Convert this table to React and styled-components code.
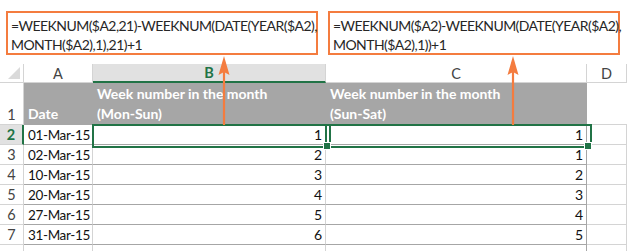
import React from 'react';
import styled, { createGlobalStyle } from 'styled-components';

const Global = createGlobalStyle`
  html, body { margin: 0; padding: 0; background: #fff; }
  body { font-family: Lato, "Open Sans", sans-serif; overflow: hidden; }
`;

const ORANGE = '#f47c3f';
const GREEN = '#217346';

const Page = styled.div`
  position: relative;
  width: 627px;
  height: 251px;
  overflow: hidden;
`;

const FormulaBar = styled.div`
  display: flex;
  gap: 10px;
  padding: 11px 0 0 6px;
  height: 44px;
`;

const Formula = styled.div`
  box-sizing: border-box;
  width: ${p => p.w}px;
  height: 44px;
  border: 2.5px solid ${ORANGE};
  padding: 3px 0 0 3px;
  font-size: 14px;
  letter-spacing: -0.55px;
  line-height: 19px;
  color: #262626;
  white-space: nowrap;
`;

const Sheet = styled.div`
  margin-top: 9px;
  display: grid;
  grid-template-columns: 24px 69px 233px 261px 1fr;
  grid-template-rows: 19px 42px repeat(6, 20px) 20px;
  font-size: 14px;
`;

const ColHead = styled.div`
  display: flex;
  align-items: center;
  justify-content: center;
  font-size: 14.5px;
  background: ${p => (p.active ? '#e1e1e1' : '#fff')};
  color: ${p => (p.active ? GREEN : '#444')};
  font-weight: ${p => (p.active ? 700 : 400)};
  border-right: 1px solid #d4d4d4;
  border-bottom: ${p => (p.active ? `2px solid ${GREEN}` : '1px solid #d4d4d4')};
  box-sizing: border-box;
`;

const Corner = styled.div`
  position: relative;
  border-right: 1px solid #d4d4d4;
  border-bottom: 1px solid #d4d4d4;
  box-sizing: border-box;
  &::after {
    content: '';
    position: absolute;
    right: 3px;
    bottom: 3px;
    border-style: solid;
    border-width: 0 0 12px 12px;
    border-color: transparent transparent #dadada transparent;
  }
`;

const RowHead = styled.div`
  display: flex;
  align-items: ${p => (p.bottom ? 'flex-end' : 'center')};
  justify-content: center;
  font-size: 14.5px;
  padding-bottom: ${p => (p.bottom ? '1px' : '0')};
  background: ${p => (p.active ? '#e1e1e1' : '#fff')};
  color: ${p => (p.active ? GREEN : '#444')};
  font-weight: ${p => (p.active ? 700 : 400)};
  border-right: ${p => (p.active ? `2px solid ${GREEN}` : '1px solid #d4d4d4')};
  border-bottom: 1px solid #d4d4d4;
  box-sizing: border-box;
`;

const HeadCell = styled.div`
  display: flex;
  flex-direction: column;
  justify-content: flex-end;
  background: ${p => (p.blank ? '#fff' : '#a6a6a6')};
  color: #fff;
  font-weight: 700;
  line-height: 20px;
  padding: 0 0 1px 4px;
  border-bottom: ${p => (p.blank ? '1px solid #d4d4d4' : 'none')};
  box-sizing: border-box;
  white-space: nowrap;
`;

const Cell = styled.div`
  display: flex;
  align-items: center;
  justify-content: ${p => (p.right ? 'flex-end' : 'flex-start')};
  padding: 0 3px 0 4px;
  color: #111;
  font-size: ${p => (p.date ? '13.5px' : '14px')};
  letter-spacing: ${p => (p.date ? '-0.35px' : '0')};
  border-bottom: 1px solid ${p => (p.blank ? '#d4d4d4' : '#a6a6a6')};
  border-right: 1px solid ${p => (p.edge ? '#a6a6a6' : '#d4d4d4')};
  box-sizing: border-box;
  white-space: nowrap;
`;

const Selection = styled.div`
  position: absolute;
  left: ${p => p.x}px;
  top: 124px;
  width: ${p => p.w}px;
  height: 20px;
  border: 2px solid ${GREEN};
  pointer-events: none;
`;

const Handle = styled.div`
  position: absolute;
  left: ${p => p.x - 3}px;
  top: 142px;
  width: 6px;
  height: 6px;
  background: ${GREEN};
  border: 1px solid #fff;
`;

const Arrow = styled.svg`
  position: absolute;
  left: ${p => p.x - 7}px;
  top: 56px;
`;

const rows = [
  ['01-Mar-15', 1, 1],
  ['02-Mar-15', 2, 1],
  ['10-Mar-15', 3, 2],
  ['20-Mar-15', 4, 3],
  ['27-Mar-15', 5, 4],
  ['31-Mar-15', 6, 5],
];

const UpArrow = ({ x }) => (
  <Arrow x={x} width="14" height="70" viewBox="0 0 14 70">
    <line x1="7" y1="10" x2="7" y2="69" stroke={ORANGE} strokeWidth="2.2" />
    <path d="M7 0 L12.5 19 L7 16 L1.5 19 Z" fill={ORANGE} />
  </Arrow>
);

export default function App() {
  return (
    <Page>
      <Global />
      <FormulaBar>
        <Formula w={312}>
          =WEEKNUM($A2,21)-WEEKNUM(DATE(YEAR($A2),<br />
          MONTH($A2),1),21)+1
        </Formula>
        <Formula w={292}>
          =WEEKNUM($A2)-WEEKNUM(DATE(YEAR($A2),<br />
          MONTH($A2),1))+1
        </Formula>
      </FormulaBar>
      <Sheet>
        <Corner />
        <ColHead>A</ColHead>
        <ColHead active>B</ColHead>
        <ColHead>C</ColHead>
        <ColHead>D</ColHead>

        <RowHead bottom>1</RowHead>
        <HeadCell>Date</HeadCell>
        <HeadCell>
          <span>Week number in the month</span>
          <span>(Mon-Sun)</span>
        </HeadCell>
        <HeadCell>
          <span>Week number in the month</span>
          <span>(Sun-Sat)</span>
        </HeadCell>
        <HeadCell blank />

        {rows.map((r, i) => (
          <React.Fragment key={r[0]}>
            <RowHead active={i === 0}>{i + 2}</RowHead>
            <Cell date>{r[0]}</Cell>
            <Cell right>{r[1]}</Cell>
            <Cell right edge>{r[2]}</Cell>
            <Cell blank />
          </React.Fragment>
        ))}

        <RowHead />
        <Cell blank />
        <Cell blank />
        <Cell blank edge />
        <Cell blank />
      </Sheet>
      <Selection x={92} w={235} />
      <Selection x={325} w={263} />
      <Handle x={326} />
      <Handle x={587} />
      <UpArrow x={224} />
      <UpArrow x={513} />
    </Page>
  );
}
